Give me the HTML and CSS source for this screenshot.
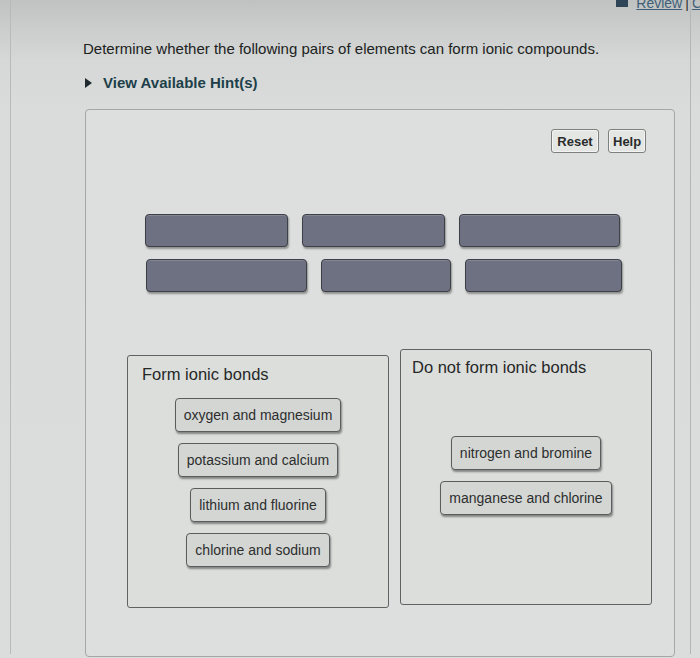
FILE: index.html
```html
<!DOCTYPE html>
<html>
<head>
<meta charset="utf-8">
<link rel="stylesheet" href="styles.css">
</head>
<body>
<div class="frame">
  <div class="topbar">
    <span class="tb-icon"></span>
    <a class="tb-link">Review</a><span class="tb-sep">|</span><a class="tb-link">C</a>
  </div>
  <div class="content">
    <p class="question">Determine whether the following pairs of elements can form ionic compounds.</p>
    <div class="hint"><span class="hint-arrow"></span>View Available Hint(s)</div>
    <div class="panel">
      <div class="toolbar">
        <button class="tbtn reset">Reset</button>
        <button class="tbtn help">Help</button>
      </div>
      <div class="tiles">
        <div class="tile-row">
          <div class="tile w143"></div>
          <div class="tile w143"></div>
          <div class="tile w161"></div>
        </div>
        <div class="tile-row row2">
          <div class="tile w161"></div>
          <div class="tile w130"></div>
          <div class="tile w157"></div>
        </div>
      </div>
      <div class="bins">
        <div class="bin bin-left">
          <div class="bin-title">Form ionic bonds</div>
          <div class="items">
            <div class="item">oxygen and magnesium</div>
            <div class="item">potassium and calcium</div>
            <div class="item">lithium and fluorine</div>
            <div class="item">chlorine and sodium</div>
          </div>
        </div>
        <div class="bin bin-right">
          <div class="bin-title">Do not form ionic bonds</div>
          <div class="items items-right">
            <div class="item">nitrogen and bromine</div>
            <div class="item">manganese and chlorine</div>
          </div>
        </div>
      </div>
    </div>
  </div>
</div>
</body>
</html>
```
FILE: styles.css
```css
* { box-sizing: border-box; }
html, body {
  margin: 0;
  padding: 0;
}
body {
  width: 700px;
  height: 658px;
  overflow: hidden;
  font-family: "Liberation Sans", Arial, Helvetica, sans-serif;
  color: #262828;
  background: linear-gradient(to bottom, #bfc2c0 0px, #c9ccca 25px, #d5d8d6 60px, #d9dcda 110px, #dadddb 100%);
}
.frame {
  margin-left: 10px;
  width: 681px;
  height: 658px;
  border-left: 1px solid #b7bab8;
  border-right: 1px solid #b3b6b4;
}
.topbar {
  height: 14px;
  margin-top: -4px;
  display: flex;
  justify-content: flex-end;
  align-items: center;
  gap: 2px;
  font-size: 14px;
  line-height: 14px;
  color: #3f5f78;
  margin-right: -12px;
}
.tb-icon {
  width: 12px;
  height: 8px;
  background: #2e4658;
  margin-right: 6px;
}
.tb-link { text-decoration: underline; }
.tb-sep { color: #333; padding: 0 1px; }
.content {
  padding-left: 72px;
}
.question {
  margin: 29px 0 0 0;
  font-size: 15px;
  line-height: 19px;
  letter-spacing: 0;
  color: #202222;
}
.hint {
  margin-top: 15px;
  display: flex;
  align-items: center;
  font-size: 15px;
  line-height: 19px;
  font-weight: bold;
  color: #1d3f4a;
}
.hint-arrow {
  width: 0;
  height: 0;
  border-top: 5px solid transparent;
  border-bottom: 5px solid transparent;
  border-left: 7px solid #1e2a30;
  margin-left: 2px;
  margin-right: 11px;
}
.panel {
  margin-top: 17px;
  margin-left: 2px;
  width: 590px;
  height: 548px;
  border: 1px solid #a4a7a6;
  border-radius: 4px;
  background: #dcdfdd;
}
.toolbar {
  display: flex;
  justify-content: flex-end;
  gap: 9px;
  padding: 19px 28px 0 0;
}
.tbtn {
  font-family: "Liberation Sans", Arial, sans-serif;
  font-size: 13px;
  font-weight: bold;
  color: #2a2c2c;
  background: #e4e6e4;
  border: 1px solid #7d807f;
  border-radius: 3px;
  height: 24px;
  padding: 0 4px;
  box-shadow: inset 0 0 0 1px #f2f3f2;
}
.reset { width: 48px; }
.help { width: 38px; }
.tiles {
  margin-top: 61px;
  margin-left: 59px;
}
.tile-row {
  display: flex;
  gap: 14px;
}
.row2 {
  margin-top: 12px;
  margin-left: 1px;
}
.tile {
  height: 33px;
  background: #6e7181;
  border: 1px solid #3e4047;
  border-radius: 4px;
  box-shadow: 1px 2px 2px rgba(0,0,0,0.35), inset 0 1px 0 rgba(255,255,255,0.15);
}
.w143 { width: 143px; }
.w161 { width: 161px; }
.w130 { width: 130px; }
.w157 { width: 157px; }
.bins {
  margin-top: 57px;
  margin-left: 41px;
  display: flex;
  align-items: flex-start;
  gap: 11px;
}
.bin {
  border: 1px solid #5f6262;
  border-radius: 3px;
  background: #dcdedc;
}
.bin-left {
  width: 262px;
  height: 253px;
  margin-top: 6px;
  padding: 8px 0 0 14px;
}
.bin-right {
  width: 252px;
  height: 256px;
  padding: 7px 0 0 11px;
}
.bin-title {
  font-size: 16.5px;
  line-height: 20px;
  color: #262828;
}
.items {
  display: flex;
  flex-direction: column;
  align-items: center;
  gap: 11px;
  margin-top: 14px;
  margin-left: -14px;
}
.items-right {
  margin-top: 59px;
  margin-left: -11px;
}
.item {
  height: 34px;
  line-height: 32px;
  padding: 0 8px;
  font-size: 14px;
  color: #2c2e2e;
  background: #d4d6d4;
  border: 1px solid #5a5c5d;
  border-radius: 4px;
  box-shadow: 1px 2px 2px rgba(0,0,0,0.4);
  white-space: nowrap;
}
```
